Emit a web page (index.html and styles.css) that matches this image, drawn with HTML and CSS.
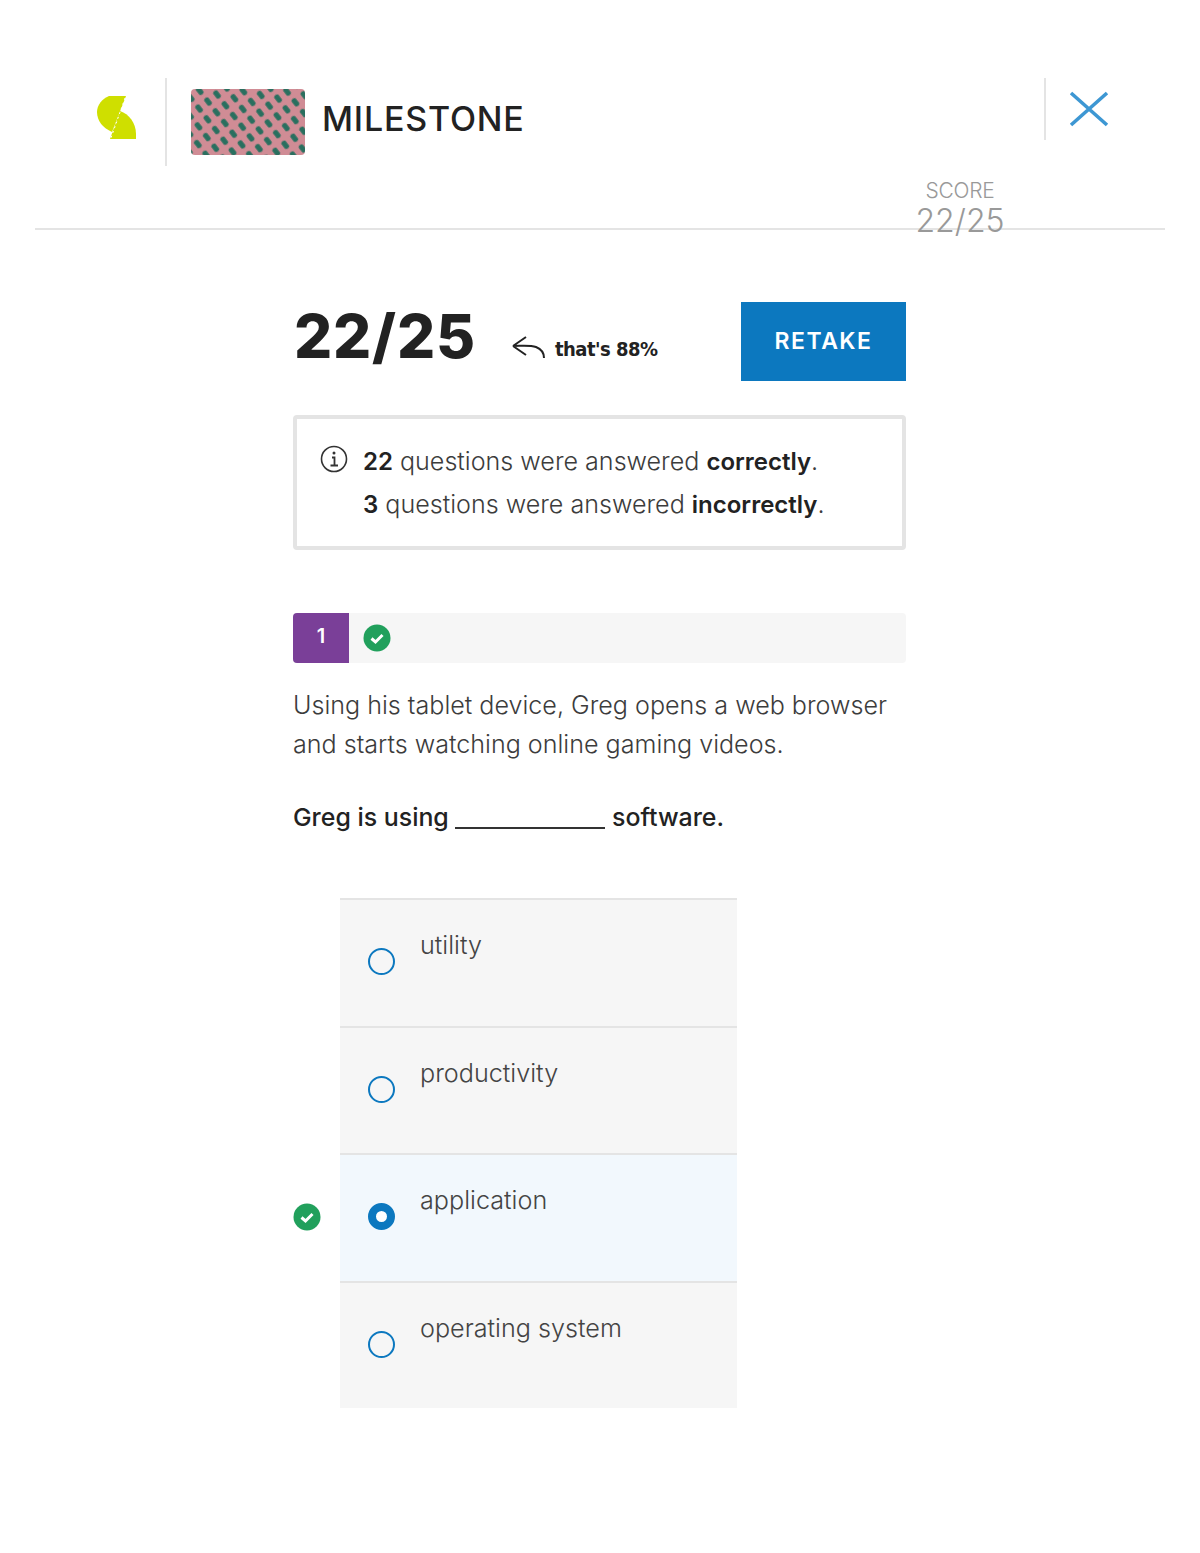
FILE: index.html
```html
<!DOCTYPE html>
<html lang="en">
<head>
  <meta charset="UTF-8">
  <title>Milestone Score</title>
  <link rel="stylesheet" href="styles.css">
</head>
<body>

  <header class="top">
    <div class="logo-cell">
      <svg class="logo" viewBox="0 0 42 46" width="42" height="46">
        <path d="M13 2 H30 L16 38 C7 34 1 27 1 18 C1 11 6 5 13 2 Z" fill="#cfdf00"/>
        <path d="M24 17 C33 20 40 29 40 40 V45 H14 Z" fill="#cfdf00"/>
        <path d="M29 4 L15 44" stroke="#fff" stroke-width="1" stroke-dasharray="2 3" fill="none"/>
      </svg>
    </div>
    <div class="thumb">
      <svg width="114" height="66">
        <defs>
          <pattern id="weave" width="11.4" height="13.6" patternUnits="userSpaceOnUse" patternTransform="rotate(-38)">
            <rect width="11.4" height="13.6" fill="#d08c95"/>
            <rect x="3.1" y="2.4" width="5.2" height="8.8" rx="2" fill="#2a6f5f"/>
          </pattern>
        </defs>
        <rect width="114" height="66" rx="4" fill="url(#weave)"/>
      </svg>
    </div>
    <div class="title">MILESTONE</div>
    <div class="close-cell">
      <svg width="40" height="36" viewBox="0 0 40 36">
        <path d="M2 2 L38 34 M38 2 L2 34" stroke="#3d97d3" stroke-width="3.6" fill="none"/>
      </svg>
    </div>
    <div class="score">
      <div class="score-label">SCORE</div>
      <div class="score-value">22/25</div>
    </div>
  </header>

  <main class="content">

    <div class="result">
      <div class="result-num">22/25</div>
      <svg class="arrow" width="34" height="24" viewBox="0 0 34 24">
        <path d="M1 10 L14 1 M1 10 L14 19 M1 10 C10 10 18 9 24 11 C29 13 32 17 32 22" stroke="#222" stroke-width="2" fill="none"/>
      </svg>
      <div class="thats">that's 88%</div>
      <button class="retake">RETAKE</button>
    </div>

    <div class="summary">
      <svg class="info" width="28" height="28" viewBox="0 0 28 28">
        <circle cx="14" cy="14" r="12.5" stroke="#333" stroke-width="1.6" fill="none"/>
        <circle cx="14" cy="8" r="1.5" fill="#333"/>
        <path d="M12 12.5 H14.5 V20 M10.5 20.5 H18" stroke="#333" stroke-width="1.8" fill="none"/>
      </svg>
      <div class="summary-text">
        <p><b>22</b> questions were answered <b>correctly</b>.</p>
        <p><b>3</b> questions were answered <b>incorrectly</b>.</p>
      </div>
    </div>

    <div class="q-bar">
      <div class="q-num">1</div>
      <svg class="check" width="28" height="28" viewBox="0 0 28 28">
        <circle cx="14" cy="14" r="13.5" fill="#21a05c"/>
        <path d="M8.5 14.5 L12.5 18 L19.5 11" stroke="#fff" stroke-width="3" fill="none"/>
      </svg>
    </div>

    <p class="q-text">Using his tablet device, Greg opens a web browser and starts watching online gaming videos.</p>
    <p class="q-fill">Greg is using <span class="blank"></span> software.</p>

    <div class="options">
      <div class="row">
        <div class="mark"></div>
        <div class="option"><span class="radio"></span><span class="label">utility</span></div>
      </div>
      <div class="row">
        <div class="mark"></div>
        <div class="option"><span class="radio"></span><span class="label">productivity</span></div>
      </div>
      <div class="row">
        <div class="mark">
          <svg class="check" width="28" height="28" viewBox="0 0 28 28">
            <circle cx="14" cy="14" r="13.5" fill="#21a05c"/>
            <path d="M8.5 14.5 L12.5 18 L19.5 11" stroke="#fff" stroke-width="3" fill="none"/>
          </svg>
        </div>
        <div class="option selected"><span class="radio"></span><span class="label">application</span></div>
      </div>
      <div class="row">
        <div class="mark"></div>
        <div class="option"><span class="radio"></span><span class="label">operating system</span></div>
      </div>
    </div>

  </main>

</body>
</html>
```

FILE: styles.css
```css
body {
  font-family: Inter, Lato, sans-serif;
  margin: 0;
  background: #fff;
  color: #222;
}

/* Top bar */
.top {
  position: relative;
  display: flex;
  height: 150px;
  margin: 0 35px;
  padding-top: 78px;
  border-bottom: 2px solid #e4e4e4;
}
.logo-cell {
  width: 130px;
  height: 88px;
  margin-right: 24px;
  border-right: 2px solid #e4e4e4;
}
.logo {
  display: block;
  margin: 16px 0 0 61px;
}
.thumb {
  height: 66px;
  margin-top: 11px;
}
.thumb svg {
  display: block;
}
.title {
  margin: 21px 0 0 17px;
  font-size: 34px;
  font-weight: 500;
  letter-spacing: .8px;
  line-height: 40px;
}
.close-cell {
  width: 121px;
  height: 62px;
  margin-left: auto;
  border-left: 2px solid #e4e4e4;
  box-sizing: border-box;
}
.close-cell svg {
  display: block;
  margin: 13px 0 0 23px;
}
.score {
  position: absolute;
  left: 865px;
  top: 179px;
  width: 120px;
  text-align: center;
  color: #999;
  font-weight: 300;
}
.score-label {
  font-size: 21px;
  letter-spacing: -.3px;
  line-height: 24px;
}
.score-value {
  font-size: 32px;
  line-height: 36px;
}

/* Main column */
.content {
  width: 613px;
  margin: 72px 0 0 293px;
}
.result {
  display: flex;
  align-items: center;
  height: 79px;
}
.result-num {
  margin: 0 -1px 11px 1px;
  font-size: 60px;
  font-weight: 800;
  letter-spacing: .8px;
}
.arrow {
  margin: 13px 0 0 37px;
}
.thats {
  margin: 14px 0 0 9px;
  font-family: "DejaVu Sans", sans-serif;
  font-size: 20px;
  font-stretch: condensed;
  font-weight: 700;
  letter-spacing: -.5px;
  color: #222;
}
.retake {
  width: 165px;
  height: 79px;
  margin-left: auto;
  padding: 0 0 2px;
  border: none;
  background: #0c78bf;
  color: #fff;
  font-family: Inter, sans-serif;
  font-size: 23px;
  font-weight: 600;
  letter-spacing: 1.5px;
}

.summary {
  display: flex;
  height: 135px;
  margin-top: 34px;
  padding: 26px 0 0 23px;
  box-sizing: border-box;
  border: 4px solid #e4e4e4;
  border-radius: 4px;
}
.info {
  margin-right: 15px;
}
.summary-text {
  margin-top: -5px;
}
.summary-text p {
  margin: 0;
  color: #3c3c3c;
  font-size: 25.1px;
  font-weight: 300;
  line-height: 43px;
}
.summary-text b {
  color: #222;
  font-size: 24px;
  font-weight: 600;
}

/* Question */
.q-bar {
  display: flex;
  align-items: center;
  height: 50px;
  margin-top: 63px;
  background: #f6f6f6;
  border-radius: 4px;
}
.q-num {
  width: 56px;
  height: 50px;
  margin-right: 14px;
  background: #7a3f98;
  border-radius: 4px 0 0 4px;
  color: #fff;
  font-size: 20px;
  font-weight: 600;
  line-height: 47px;
  text-align: center;
}
.q-text {
  margin: 23px 0 0;
  color: #3c3c3c;
  font-size: 25.1px;
  font-weight: 300;
  line-height: 38.5px;
}
.q-fill {
  margin: 35px 0 0;
  font-size: 24.9px;
  font-weight: 500;
  line-height: 38px;
}
.blank {
  display: inline-block;
  width: 150px;
  border-bottom: 2px solid #333;
  vertical-align: -3px;
}

/* Answer options */
.options {
  margin-top: 62px;
}
.row {
  display: flex;
  align-items: center;
}
.mark {
  display: flex;
  width: 47px;
  align-items: center;
}
.option {
  display: flex;
  width: 397px;
  height: 125.6px;
  border-top: 2px solid #e4e4e4;
  background: #f6f6f6;
}
.option.selected {
  background: #f2f8fd;
}
.radio {
  flex: none;
  width: 27px;
  height: 27px;
  box-sizing: border-box;
  margin: 48px 25px 0 28px;
  border: 2.5px solid #0c78bf;
  border-radius: 50%;
}
.selected .radio {
  border: 8px solid #0c78bf;
  background: #fff;
}
.label {
  margin-top: 26px;
  font-size: 25.2px;
  font-weight: 300;
  line-height: 38px;
  color: #444;
}
```
